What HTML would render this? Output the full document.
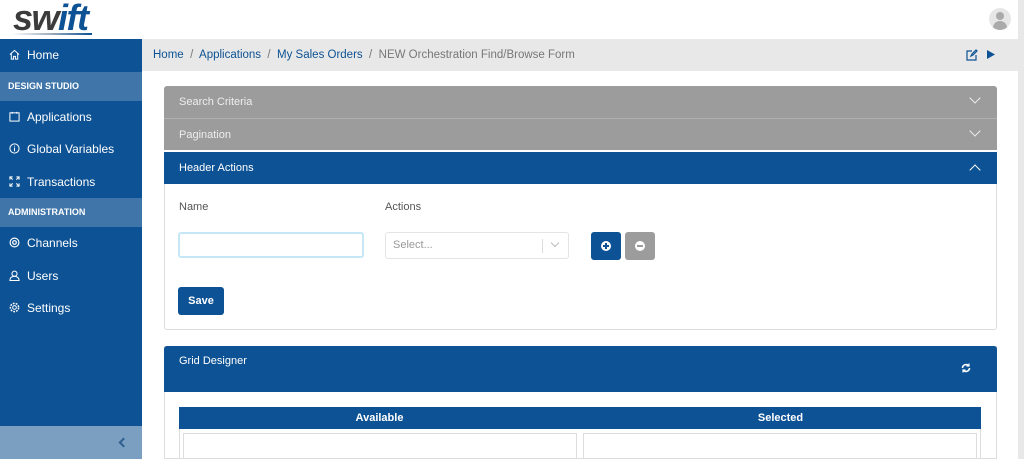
<!DOCTYPE html>
<html><head><meta charset="utf-8"><style>
*{box-sizing:border-box;margin:0;padding:0}
body{width:1024px;height:459px;overflow:hidden;background:#fff;font-family:"Liberation Sans",sans-serif;position:relative}
.abs{position:absolute}
.top{left:0;top:0;width:1018px;height:39px;background:#fff}
.logo{left:13px;top:-3px;font-size:36px;font-weight:bold;font-style:italic;letter-spacing:-1.5px;color:#3c3c3c}
.logo b{color:#0d5294}
.logoline{left:12px;top:33px;width:80px;height:2px;background:linear-gradient(90deg,#fff,#9ab,#0d5294)}
.avatar{left:989px;top:8px;width:22px;height:22px;border-radius:50%;background:#e6e6e6;overflow:hidden}
.sb{left:0;top:39px;width:142px;height:420px;background:#0d5294;color:#fff;font-size:12px}
.item{position:absolute;left:0;width:142px;height:32px;line-height:32px;padding-left:27px}
.ico{position:absolute;left:9px;top:10px;width:11px;height:11px}
.sec{position:absolute;left:0;width:142px;height:29px;line-height:29px;background:#3f75a8;font-size:9px;font-weight:bold;padding-left:8px}
.sbfoot{position:absolute;left:0;top:387px;width:142px;height:33px;background:#7a9fc0}
.bc{left:142px;top:39px;width:876px;height:32px;background:#e8e8e8;font-size:11.5px;line-height:32px;padding-left:11px;color:#0d5294}
.bc span{color:#777}
.scroll{left:1018px;top:0;width:6px;height:459px;background:#e8e8e8}
.acc{left:164px;width:833px;height:32px;font-size:11px;line-height:32px;padding-left:15px;color:#eee;background:#9c9c9c}
.chev{position:absolute;right:18px;top:8px;width:8px;height:8px;border-right:1px solid #eee;border-bottom:1px solid #eee;transform:rotate(45deg)}
.card{left:164px;top:184px;width:833px;height:146px;border:1px solid #ddd;border-top:none;border-radius:0 0 3px 3px}
.lbl{font-size:11px;color:#555}
</style></head><body>
<div class="abs top"></div>
<div class="abs logo">sw<b>ift</b></div>
<div class="abs logoline"></div>
<div class="abs avatar"><div style="position:absolute;left:7px;top:4px;width:8px;height:8px;border-radius:50%;background:#aaa"></div><div style="position:absolute;left:4px;top:13px;width:14px;height:10px;border-radius:7px 7px 0 0;background:#aaa"></div></div>
<div class="abs scroll"></div>

<div class="abs sb">
 <div class="item" style="top:0"><svg class="ico" viewBox="0 0 12 12" fill="none" stroke="#fff" stroke-width="1.1"><path d="M1 6L6 1.5 11 6M2.5 5v6h2.5V8h2v3h2.5V5"/></svg>Home</div>
 <div class="sec" style="top:33px">DESIGN STUDIO</div>
 <div class="item" style="top:62px"><svg class="ico" viewBox="0 0 12 12" fill="none" stroke="#fff" stroke-width="1.1"><rect x="1" y="2" width="10" height="9"/><path d="M3.5 1v2M8.5 1v2"/></svg>Applications</div>
 <div class="item" style="top:94px"><svg class="ico" viewBox="0 0 12 12" fill="none" stroke="#fff" stroke-width="1.1"><circle cx="6" cy="6" r="5"/><path d="M6 5v4M6 3v1"/></svg>Global Variables</div>
 <div class="item" style="top:127px"><svg class="ico" viewBox="0 0 12 12" fill="none" stroke="#fff" stroke-width="1.1"><path d="M1 4V1h3M8 1h3v3M11 8v3H8M4 11H1V8M1 1l3 3M11 1L8 4M11 11L8 8M1 11l3-3"/></svg>Transactions</div>
 <div class="sec" style="top:159px">ADMINISTRATION</div>
 <div class="item" style="top:188px"><svg class="ico" viewBox="0 0 12 12" fill="none" stroke="#fff" stroke-width="1.3"><circle cx="6" cy="6" r="4.8"/><circle cx="6" cy="6" r="2"/></svg>Channels</div>
 <div class="item" style="top:221px"><svg class="ico" viewBox="0 0 12 12" fill="none" stroke="#fff" stroke-width="1.1"><circle cx="6" cy="4" r="2.8"/><path d="M1 11.5c0-3 2-4.5 5-4.5s5 1.5 5 4.5z"/></svg>Users</div>
 <div class="item" style="top:253px"><svg class="ico" viewBox="0 0 12 12" fill="none" stroke="#fff" stroke-width="1.6" stroke-dasharray="2 1.2"><circle cx="6" cy="6" r="4.5"/></svg><svg class="ico" viewBox="0 0 12 12" fill="none" stroke="#fff" stroke-width="1.1"><circle cx="6" cy="6" r="2"/></svg>Settings</div>
 <div class="sbfoot"><div style="position:absolute;left:120px;top:13px;width:7px;height:7px;border-left:2px solid #2f5f90;border-bottom:2px solid #2f5f90;transform:rotate(45deg)"></div></div>
</div>

<div class="abs bc">Home <span>&nbsp;/&nbsp;</span> Applications <span>&nbsp;/&nbsp;</span> My Sales Orders <span>&nbsp;/&nbsp; NEW Orchestration Find/Browse Form</span></div>
<svg class="abs" style="left:966px;top:49px" width="12" height="12" viewBox="0 0 12 12" fill="none" stroke="#0d5294" stroke-width="1.2"><path d="M6 2H1v9h9V6"/><path d="M5 7l1-2 4-4 1 1-4 4z"/></svg>
<svg class="abs" style="left:986px;top:49px" width="10" height="11" viewBox="0 0 10 11"><path d="M1 1l8 4.5-8 4.5z" fill="#0d5294"/></svg>

<div class="abs acc" style="top:86px;border-radius:3px 3px 0 0">Search Criteria<div class="chev"></div></div>
<div class="abs acc" style="top:118px;border-top:1px solid #b0b0b0">Pagination<div class="chev"></div></div>
<div class="abs acc" style="top:152px;background:#0d5294;color:#fff">Header Actions<div class="chev" style="transform:rotate(225deg);top:14px;border-color:#fff"></div></div>
<div class="abs card"></div>
<div class="abs lbl" style="left:179px;top:201px">Name</div>
<div class="abs lbl" style="left:385px;top:201px">Actions</div>
<div class="abs" style="left:178px;top:232px;width:186px;height:26px;border:2px solid #c6e8f6;border-radius:3px"></div>
<div class="abs" style="left:385px;top:232px;width:184px;height:27px;border:1px solid #e4e4e4;border-radius:3px;font-size:11px;color:#999;line-height:25px;padding-left:7px">Select...<div style="position:absolute;left:156px;top:6px;width:1px;height:14px;background:#ddd"></div><div style="position:absolute;left:166px;top:7px;width:6px;height:6px;border-right:1px solid #bbb;border-bottom:1px solid #bbb;transform:rotate(45deg)"></div></div>
<div class="abs" style="left:591px;top:232px;width:30px;height:28px;background:#0d5294;border-radius:3px"><div style="position:absolute;left:10px;top:9px;width:10px;height:10px;border-radius:50%;background:#fff"><div style="position:absolute;left:2px;top:4px;width:6px;height:2px;background:#0d5294"></div><div style="position:absolute;left:4px;top:2px;width:2px;height:6px;background:#0d5294"></div></div></div>
<div class="abs" style="left:625px;top:232px;width:30px;height:28px;background:#9c9c9c;border-radius:3px"><div style="position:absolute;left:10px;top:9px;width:10px;height:10px;border-radius:50%;background:#fff"><div style="position:absolute;left:2px;top:4px;width:6px;height:2px;background:#9c9c9c"></div></div></div>
<div class="abs" style="left:178px;top:287px;width:46px;height:28px;background:#0d5294;border-radius:3px;color:#fff;font-size:11px;font-weight:bold;line-height:28px;text-align:center">Save</div>

<div class="abs" style="left:164px;top:346px;width:833px;height:113px;border:1px solid #ddd"></div>
<div class="abs acc" style="top:346px;height:46px;background:#0d5294;color:#fff;line-height:30px;border-radius:3px 3px 0 0">Grid Designer
<svg style="position:absolute;left:797px;top:17px" width="10" height="10" viewBox="0 0 10 10" fill="none" stroke="#fff" stroke-width="1.6"><path d="M1.5 5a3.5 3.5 0 0 1 6.3-2M8.5 5a3.5 3.5 0 0 1-6.3 2"/><path d="M8 0.5v2.5H5.5M2 9.5V7h2.5" stroke-width="1.2"/></svg></div>
<div class="abs" style="left:179px;top:407px;width:802px;height:22px;background:#0d5294;color:#fff;font-size:11px;font-weight:bold;line-height:22px">
<div style="position:absolute;left:0;width:401px;text-align:center">Available</div>
<div style="position:absolute;left:401px;width:401px;text-align:center">Selected</div></div>
<div class="abs" style="left:179px;top:429px;width:802px;height:30px;border-left:1px solid #ddd;border-right:1px solid #ddd"></div>
<div class="abs" style="left:183px;top:433px;width:394px;height:26px;border:1px solid #ddd"></div>
<div class="abs" style="left:583px;top:433px;width:394px;height:26px;border:1px solid #ddd"></div>
</body></html>
